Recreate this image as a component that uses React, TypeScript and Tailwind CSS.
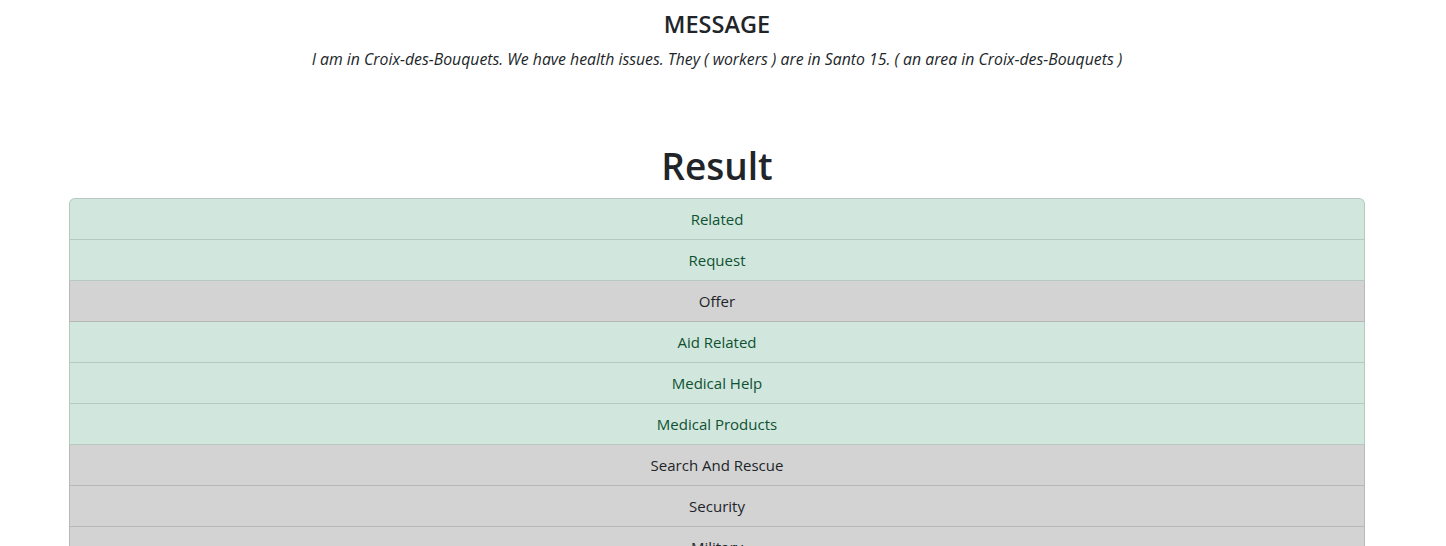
const categories: { name: string; hit: boolean }[] = [
  { name: 'Related', hit: true },
  { name: 'Request', hit: true },
  { name: 'Offer', hit: false },
  { name: 'Aid Related', hit: true },
  { name: 'Medical Help', hit: true },
  { name: 'Medical Products', hit: true },
  { name: 'Search And Rescue', hit: false },
  { name: 'Security', hit: false },
  { name: 'Military', hit: false },
  { name: 'Child Alone', hit: false },
  { name: 'Water', hit: false },
  { name: 'Food', hit: false },
  { name: 'Shelter', hit: false },
  { name: 'Clothing', hit: false },
  { name: 'Money', hit: false },
]

export default function App() {
  return (
    <div className="min-h-screen bg-white pr-[12px] font-['Open_Sans',sans-serif] text-[#212529]">
      <div className="mx-auto max-w-[1320px] px-3">
        <div className="pt-[10px] text-center">
          <h3 className="text-[23.5px] font-semibold leading-[29px]">MESSAGE</h3>
          <p className="mt-2 text-[15.8px] italic leading-6">
            I am in Croix-des-Bouquets. We have health issues. They ( workers ) are in Santo 15. ( an area in Croix-des-Bouquets )
          </p>
        </div>

        <h1 className="mt-[71px] mb-2 text-center text-[37px] font-semibold leading-[48px]">Result</h1>

        <ul className="pb-6">
          {categories.map((c) => (
            <li
              key={c.name}
              className={
                c.hit
                  ? 'border-x border-b border-black/[.125] bg-[#d1e7dd] px-4 py-2 text-center text-[15px] leading-6 text-[#0f5132] first:rounded-t-md first:border-t'
                  : 'border-x border-b border-black/[.125] bg-[#d3d3d3] px-4 py-2 text-center text-[15px] leading-6 text-[#212529] first:rounded-t-md first:border-t'
              }
            >
              {c.name}
            </li>
          ))}
        </ul>
      </div>
    </div>
  )
}
